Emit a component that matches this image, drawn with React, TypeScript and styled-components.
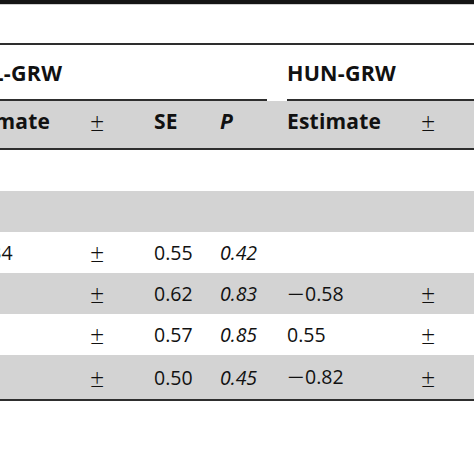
import React from 'react';
import styled, { createGlobalStyle } from 'styled-components';

const GlobalStyle = createGlobalStyle`
  html, body {
    margin: 0;
    padding: 0;
    background: #ffffff;
    overflow: hidden;
  }
  body {
    font-family: "Open Sans", "Liberation Sans", sans-serif;
    color: #111111;
  }
`;

const Page = styled.main`
  width: 474px;
  height: 474px;
  overflow: hidden;
  background: #ffffff;
`;

const TopBar = styled.div`
  height: 4px;
  background: #151515;
  border-bottom: 1px solid #d0d0d0;
`;

// the table is wider than the shot, so its left edge is cut off
const Table = styled.section`
  width: 662px;
  margin-left: -44px;
  margin-top: 38px;
`;

const Rule = styled.div`
  height: 2px;
  background: #2e2e2e;
`;

const GroupRow = styled.div`
  display: grid;
  grid-template-columns: 331px 331px;
  height: 56px;
`;

const GroupHeading = styled.div`
  display: flex;
  align-items: center;
  box-sizing: border-box;
  height: 56px;
  margin-right: 20px;
  border-bottom: 2px solid #2e2e2e;
  font-size: 21.5px;
  font-weight: 700;
  letter-spacing: 0.2px;
  white-space: nowrap;
`;

const columns = '134px 64px 66px 67px 134px 64px 66px 67px';

const HeaderRow = styled.div`
  display: grid;
  grid-template-columns: ${columns};
  align-items: center;
  box-sizing: border-box;
  height: 49px;
  padding-bottom: 7px;
  background: #d3d3d3;
  border-bottom: 2px solid #2e2e2e;
  font-size: 21px;
  font-weight: 700;
  letter-spacing: 0.2px;
`;

const DataRow = styled.div<{ $shaded?: boolean; $tall?: boolean }>`
  display: grid;
  grid-template-columns: ${columns};
  align-items: center;
  height: ${({ $tall }) => ($tall ? '44px' : '41px')};
  background: ${({ $shaded }) => ($shaded ? '#d3d3d3' : '#ffffff')};
  font-size: 19.5px;
`;

const Cell = styled.span<{ $italic?: boolean }>`
  display: flex;
  align-items: center;
  white-space: nowrap;
  font-style: ${({ $italic }) => ($italic ? 'italic' : 'normal')};
`;

const PlusMinus = styled.span`
  font-size: 25px;
  font-weight: 300;
  font-style: normal;
  line-height: 1;
`;

const Minus = styled.span`
  display: inline-block;
  width: 18px;
  font-size: 30px;
  font-weight: 300;
  line-height: 1;
  vertical-align: -4px;
`;

type Group = [string, string, string] | null;

const rows: { left: Group; right: Group }[] = [
  { left: null, right: null },
  { left: null, right: null },
  { left: ['-0.34', '0.55', '0.42'], right: null },
  { left: ['0.12', '0.62', '0.83'], right: ['-0.58', '0.60', '0.34'] },
  { left: ['0.10', '0.57', '0.85'], right: ['0.55', '0.58', '0.35'] },
  { left: ['0.38', '0.50', '0.45'], right: ['-0.82', '0.52', '0.12'] },
];

const Value = ({ v }: { v: string }) =>
  v.startsWith('-') ? (
    <span>
      <Minus>−</Minus>
      {v.slice(1)}
    </span>
  ) : (
    <span>{v}</span>
  );

const renderGroup = (g: Group, key: string) =>
  g
    ? [
        <Cell key={key + 'e'}>
          <Value v={g[0]} />
        </Cell>,
        <Cell key={key + 'pm'}>
          <PlusMinus>±</PlusMinus>
        </Cell>,
        <Cell key={key + 'se'}>{g[1]}</Cell>,
        <Cell key={key + 'p'} $italic>
          {g[2]}
        </Cell>,
      ]
    : [0, 1, 2, 3].map((i) => <Cell key={key + i} />);

const App = () => (
  <Page>
    <GlobalStyle />
    <TopBar />
    <Table>
      <Rule />
      <GroupRow>
        <GroupHeading>MAL-GRW</GroupHeading>
        <GroupHeading>HUN-GRW</GroupHeading>
      </GroupRow>
      <HeaderRow>
        {['a', 'b'].map((k) => (
          <React.Fragment key={k}>
            <Cell>Estimate</Cell>
            <Cell>
              <PlusMinus>±</PlusMinus>
            </Cell>
            <Cell>SE</Cell>
            <Cell $italic>P</Cell>
          </React.Fragment>
        ))}
      </HeaderRow>
      {rows.map((r, i) => (
        <DataRow key={i} $shaded={i % 2 === 1} $tall={i === rows.length - 1}>
          {renderGroup(r.left, 'l')}
          {renderGroup(r.right, 'r')}
        </DataRow>
      ))}
      <Rule />
    </Table>
  </Page>
);

export default App;
